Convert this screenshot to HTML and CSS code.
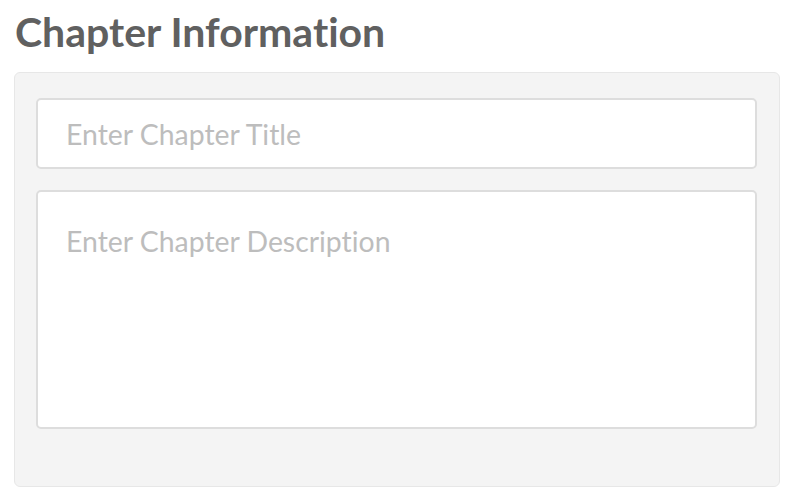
FILE: index.html
```html
<!DOCTYPE html>
<html lang="en">
<head>
<meta charset="utf-8">
<title>Chapter Information</title>
<link rel="stylesheet" href="styles.css">
</head>
<body>
<h1 class="title">Chapter Information</h1>
<div class="panel">
  <input class="field field-title" type="text" placeholder="Enter Chapter Title">
  <textarea class="field field-desc" placeholder="Enter Chapter Description"></textarea>
</div>
</body>
</html>
```

FILE: styles.css
```css
html, body {
  margin: 0;
  padding: 0;
  background: #ffffff;
}
body {
  font-family: Lato, "Noto Sans", sans-serif;
  font-variant-ligatures: none;
  padding: 7px 12px 0 14px;
}
.title {
  margin: 0 0 0 1px;
  font-size: 41px;
  font-weight: 700;
  line-height: 1.2;
  color: #606060;
  height: 65px;
  font-variant-ligatures: none;
}
.panel {
  box-sizing: border-box;
  width: 766px;
  height: 415px;
  background: #f4f4f4;
  border: 1px solid #e7e7e7;
  border-radius: 6px;
  padding: 25px 22px 0 21px;
  display: flex;
  flex-direction: column;
  gap: 21px;
}
.field {
  box-sizing: border-box;
  width: 721px;
  margin: 0;
  background: #ffffff;
  border: 2px solid #dddddd;
  border-radius: 5px;
  font-family: Lato, "Noto Sans", sans-serif;
  font-variant-ligatures: none;
  font-size: 28.4px;
  line-height: 1.2;
  color: #444;
  padding: 0 28px;
  outline: none;
}
.field::placeholder {
  color: #bdbdbd;
  opacity: 1;
  font-variant-ligatures: none;
}
.field-title {
  height: 71px;
  display: block;
}
.field-desc {
  height: 239px;
  display: block;
  resize: none;
  padding-top: 32px;
}
```
